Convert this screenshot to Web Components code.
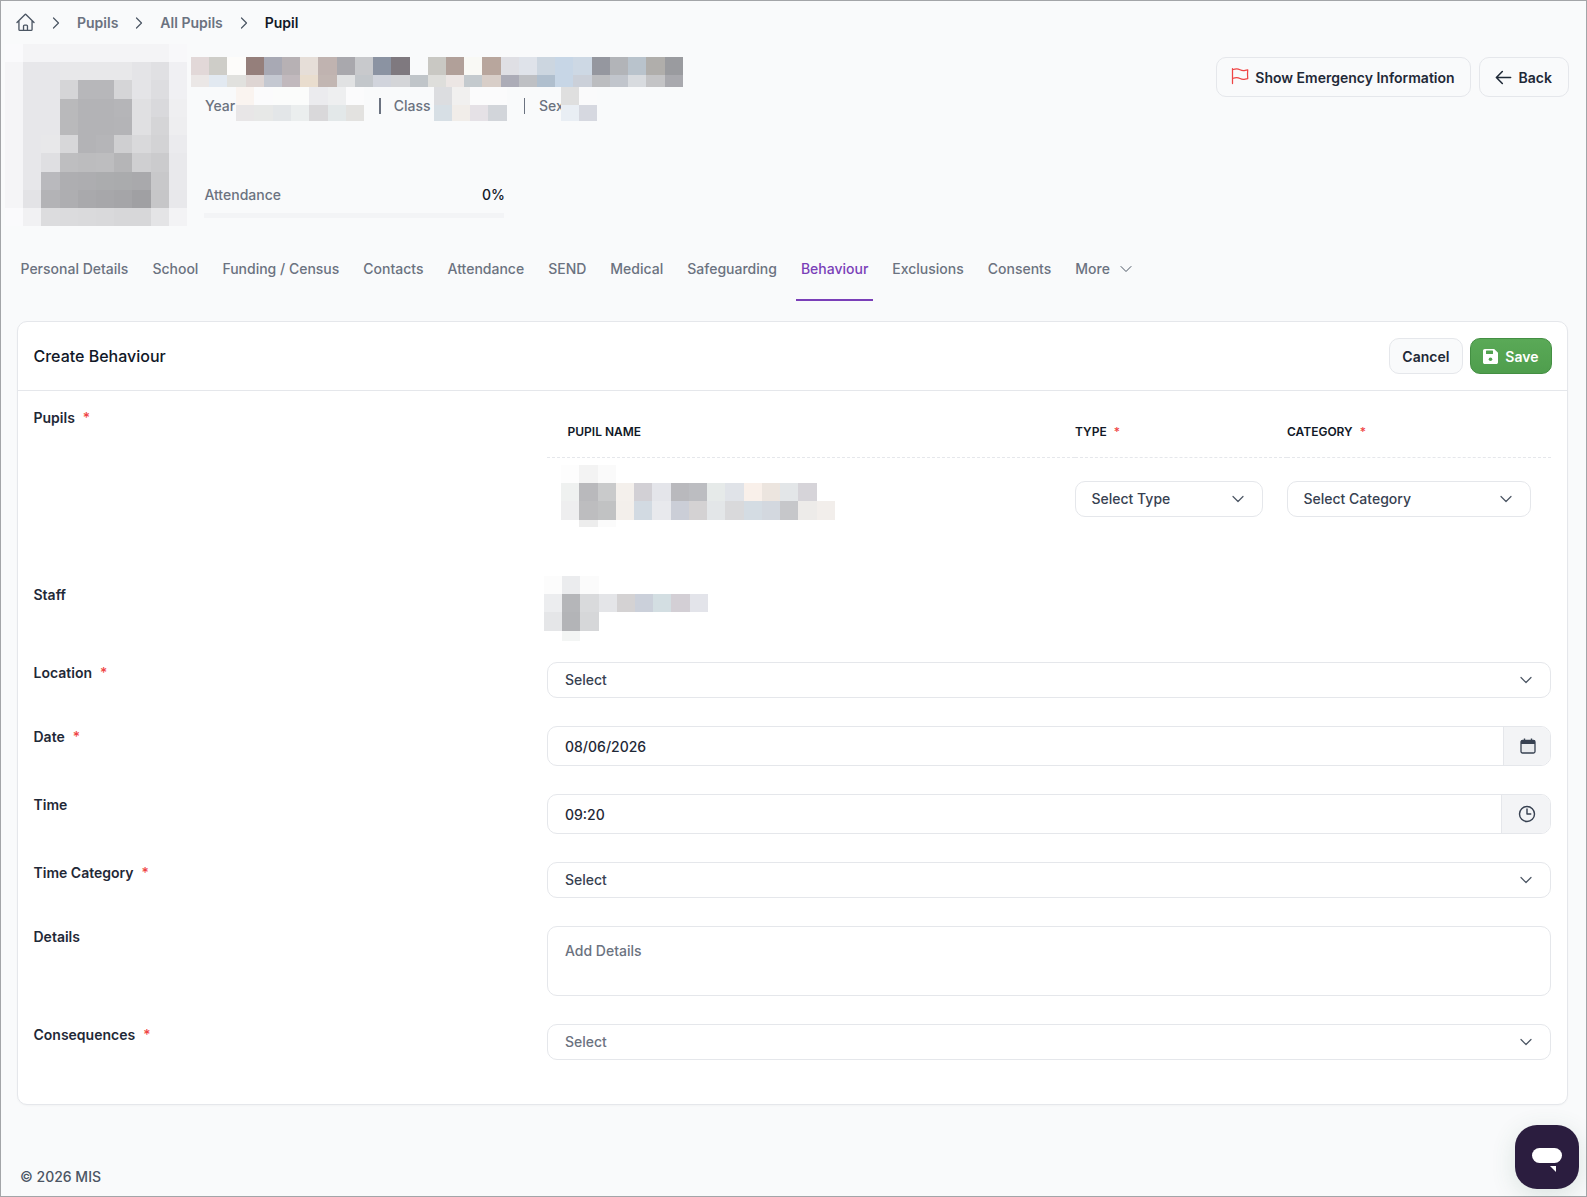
<!DOCTYPE html>
<html lang="en">
<head>
<meta charset="utf-8">
<title>Create Behaviour</title>
<style>
  html, body { margin: 0; padding: 0; background: #f9fafb; }
  body { font: 500 14px/20px Inter, "Liberation Sans", sans-serif; color: #1f2937; }
</style>
</head>
<body>

<mis-frame>
  <mis-breadcrumb></mis-breadcrumb>
  <pupil-header></pupil-header>
  <tab-bar></tab-bar>

  <form-card heading="Create Behaviour">
    <form-row label="Pupils" required><pupil-table></pupil-table></form-row>
    <form-row label="Staff">
      <pixel-mosaic style="margin: -9px 0 -7px -3px" w="18.2" heights="18 18 19 10" rows="fcfcfc ebecee fbfbfb|ecedef b5b6b9 d9dadc e4e5e8 d4d2d3 cbd0da d3dee2 d3cfd5 e3e4ea|e5e6e8 b3b4b7 d6d7d9|x f3f5f4"></pixel-mosaic>
    </form-row>
    <form-row low label="Location" required><select-box>Select</select-box></form-row>
    <form-row low label="Date" required><addon-input value="08/06/2026" icon="calendar" addon="47"></addon-input></form-row>
    <form-row low label="Time"><addon-input value="09:20" icon="clock" addon="49"></addon-input></form-row>
    <form-row low label="Time Category" required><select-box>Select</select-box></form-row>
    <form-row low label="Details"><details-area>Add Details</details-area></form-row>
    <form-row low label="Consequences" required><select-box muted>Select</select-box></form-row>
  </form-card>

  <mis-footer></mis-footer>
</mis-frame>
<chat-launcher></chat-launcher>

<script>
(function() {

  const icons = {
    chevronDown: '<path d="M19.5 8.25l-7.5 7.5-7.5-7.5"/>',
    chevronRight: '<path d="M8.25 4.5l7.5 7.5-7.5 7.5"/>',
    home: '<path d="M2.25 12l8.954-8.955c.44-.439 1.152-.439 1.591 0L21.75 12M4.5 9.75v10.125c0 .621.504 1.125 1.125 1.125H9.75v-4.875c0-.621.504-1.125 1.125-1.125h2.25c.621 0 1.125.504 1.125 1.125V21h4.125c.621 0 1.125-.504 1.125-1.125V9.75M8.25 21h8.25"/>',
    flag: '<path d="M3 3v1.5M3 21v-6m0 0l2.77-.693a9 9 0 016.208.682l.108.054a9 9 0 006.086.71l3.114-.732a48.524 48.524 0 01-.005-10.499l-3.11.732a9 9 0 01-6.085-.711l-.108-.054a9 9 0 00-6.208-.682L3 4.5M3 15V4.5"/>',
    back: '<path d="M10.5 19.5L3 12m0 0l7.5-7.5M3 12h18"/>',
    clock: '<path d="M12 6v6h4.5m4.5 0a9 9 0 11-18 0 9 9 0 0118 0z"/>'
  };

  const svg = (name, size, stroke, width) =>
    `<svg width="${size}" height="${size}" viewBox="0 0 24 24" fill="none" stroke="${stroke}" stroke-width="${width}" stroke-linecap="round" stroke-linejoin="round">${icons[name]}</svg>`;

  /**
   * Base class, sets up the open shadow root with the element's html
   */
  class ShadowBase extends HTMLElement {
    connectedCallback() {
      if (this.shadowRoot) return;
      this.$root = this.attachShadow({ mode: 'open' });
      this.$root.innerHTML = this.template();
    }
  }

  class MisFrame extends ShadowBase {
    template() {
      return `
        <style>
          :host { display: flex; flex-direction: column; box-sizing: border-box; height: 1197px; border: 1px solid #a3a5a8; background: #f9fafb; overflow: hidden; }
        </style>
        <slot></slot>`;
    }
  }

  class MisBreadcrumb extends ShadowBase {
    template() {
      const chev = svg('chevronRight', 16, '#4b5563', 1.8);
      return `
        <style>
          :host { display: flex; align-items: center; box-sizing: border-box; height: 43px; padding: 0 0 0 14px; gap: 13px; color: #6b7280; font-weight: 600; }
          svg { display: block; flex: none; }
          b { font-weight: 600; color: #111827; }
          span { margin-top: 1px; }
          .home { margin-right: -1px; margin-top: -1px; }
        </style>
        <div class="home">${svg('home', 21, '#4b5563', 1.5)}</div>
        ${chev}<span>Pupils</span>${chev}<span>All Pupils</span>${chev}<span><b>Pupil</b></span>`;
    }
  }

  /**
   * Blurred out picture or name, a grid of coloured cells
   * @attr rows colours, cells split by space and rows by |, x is see-through
   */
  class PixelMosaic extends ShadowBase {
    template() {
      const w = parseFloat(this.getAttribute('w'));
      const heights = this.getAttribute('heights').split(' ');
      const rows = this.getAttribute('rows').split('|').map(r => r.split(' '));
      const cols = Math.max(...rows.map(r => r.length));
      let cells = '';
      rows.forEach(r => {
        for (let i = 0; i < cols; i++) {
          const c = r[i];
          cells += `<i style="background:${c && c !== 'x' ? '#' + c : 'transparent'}"></i>`;
        }
      });
      return `
        <style>
          :host { display: grid; flex: none; width: max-content; grid-template-columns: repeat(${cols}, ${w}px); grid-template-rows: ${heights.map(h => h + 'px').join(' ')}; }
          i { display: block; }
        </style>
        ${cells}`;
    }
  }

  class UiButton extends ShadowBase {
    template() {
      return `
        <style>
          :host { display: inline-flex; align-items: center; box-sizing: border-box; height: var(--btn-h, 40px); border: 1px solid #e5e7eb; border-radius: 10px; background: #f9fafb; color: #1f2937; font-weight: 600; white-space: nowrap; }
          :host([primary]) { background: linear-gradient(#5aa957, #4f9e4d); border-color: #448f43; color: #fff; }
        </style>
        <slot></slot>`;
    }
  }

  class PupilHeader extends ShadowBase {
    connectedCallback() {
      if (this.shadowRoot) return;
      this.$root = this.attachShadow({ mode: 'open' });
      this.$root.innerHTML = `
        <style>
          :host { display: flex; align-items: flex-start; height: 182px; padding: 0 17px 0 4px; }
          .mid { margin-left: 4px; padding-top: 13px; color: #6b7280; }
          .meta { display: flex; align-items: flex-start; height: 34px; padding-left: 14px; }
          .meta span { margin-top: 9px; white-space: nowrap; }
          .meta u { display: block; width: 1.5px; height: 16px; margin-top: 11px; background: #6b7280; }
          .att { display: flex; justify-content: space-between; width: 300.5px; margin: 64px 0 0 13.5px; }
          .att b { font-weight: 500; color: #111827; }
          .bar { width: 300px; height: 5px; margin: 8px 0 0 13.5px; background: #f3f4f6; }
          .actions { display: flex; gap: 8px; margin-left: auto; padding-top: 13px; }
          ui-button svg { display: block; flex: none; margin-top: -2px; }
          .flag { padding: 2px 15px 0 13px; }
          .flag svg { margin-right: 5px; margin-top: -4px; }
          .back { padding: 2px 16px 0 14px; }
          .back svg { margin-right: 6px; }
        </style>
        <pixel-mosaic w="18.2" heights="18 18 19 18 18 18 19 18 18 18" rows="fafafc f4f4f6 f4f4f6 f4f4f6 f4f4f6 f4f4f6 f4f4f6 f4f4f6 f4f4f6 f8f8fa|f5f5f7 e7e7ea e7e7ea e8e8ea e8e8ea e8e8ea e8e8ea e4e4e7 e0e0e3 f0f0f3|f5f5f7 e7e7ea e7e7ea d5d5d7 b7b7ba b7b7ba d5d5d7 e4e4e7 dddde0 f0f0f3|f5f5f7 e7e7ea e7e7ea b9b9bb b3b3b6 b3b3b6 b5b5b8 e0e0e2 d9d9dc efeff1|f5f5f7 e7e7ea e7e7ea b9b9bb b3b3b6 b3b3b6 b4b4b7 e0e0e2 d5d5d7 eeeef0|f5f5f7 e7e7ea e8e8ea d7d7d9 b3b3b6 b5b5b8 cfcfd1 d9d9db d3d3d5 ebebee|f5f5f7 e7e7ea dfdfe2 bebec0 bcbcbe bdbdbf b5b5b7 cfcfd1 cbcbcd e9e9ec|f5f5f7 e7e7ea b9b9bd aeaeb1 adadb0 abacae aaabad a9a9ac c8c8ca e9e9ec|f5f5f7 e3e3e6 b3b3b6 aeaeb1 a9a9ac a7a7aa a5a5a8 a0a0a3 c6c6c8 e8e8eb|fafafc f1f1f3 dcdcde dbdbdd dadadc d9d9db d7d7d9 d7d7d9 e4e4e6 f3f3f5"></pixel-mosaic>
        <div class="mid">
          <pixel-mosaic w="18.22" heights="18 12" rows="e2d8d8 cecdc8 fdfcfa 957f7b a8a9b4 b7b1b4 e6ded8 c0b3b0 a9a8ad c8c9cc 8b93a2 7f797f x c9c8c3 b1a099 f9f9f5 b8a69d dfdfe4 dfe3ea ccd6e0 c7d6e6 cdd8e4 95979f b2b4b8 b9c3cc b0aeab 9a9b9f|ebe7e6 e2e9f1 e1e1de ded5d3 c4c8d1 c1b9bd e9ddce c2b6b2 e1e2e3 c3c7cb d1d4dc d4d5d8 c0c5c9 dededb ece6e4 c4cace d8cec8 acacb7 bec0c4 b0bfce c7d6e6 cbd0d9 bcbdc0 c1c5cc d8dbdf c4c4c6 a9a9ae"></pixel-mosaic>
          <div class="meta">
            <span>Year</span>
            <pixel-mosaic style="margin-left:1px" w="18.3" heights="18 16" rows="faf4f0 fbfbfc fbfcfb fbfcfb ebebee eeeff0 fbfbfc|e8e6e7 e7e8e7 e3e6e8 ebeeee d9d8da e3e8e9 e3e2e0"></pixel-mosaic>
            <u style="margin-left:15px"></u>
            <span style="margin-left:13px">Class</span>
            <pixel-mosaic style="margin-left:3px" w="18.25" heights="18 16" rows="dcdde0 f1f0ef fbfbfc fbfbfc|d7dfe5 f1ede9 e5e1e6 d2d5da"></pixel-mosaic>
            <u style="margin-left:17px"></u>
            <span style="margin-left:14px">Sex</span>
            <pixel-mosaic style="margin-left:-3px" w="18" heights="18 16" rows="dfdfdf fafafb|e9eef4 d6d8e0"></pixel-mosaic>
          </div>
          <div class="att"><span>Attendance</span><b>0%</b></div>
          <div class="bar"></div>
        </div>
        <div class="actions">
          <ui-button class="flag">${svg('flag', 20, '#ef4444', 1.5)}Show Emergency Information</ui-button>
          <ui-button class="back">${svg('back', 19, '#1f2937', 2)}Back</ui-button>
        </div>`;
    }
  }

  class TabBar extends ShadowBase {
    template() {
      const tabs = ['Personal Details', 'School', 'Funding / Census', 'Contacts', 'Attendance', 'SEND', 'Medical', 'Safeguarding', 'Behaviour', 'Exclusions', 'Consents'];
      return `
        <style>
          :host { display: flex; gap: 15px; padding: 26px 0 20px 15px; color: #6b7280; font-weight: 500; }
          a { display: flex; align-items: center; padding: 7px 4.5px 20px; border-bottom: 2px solid transparent; white-space: nowrap; }
          a.on { color: #7a3fb8; border-bottom-color: #7a3fb8; }
          svg { display: block; margin-left: 8px; }
        </style>
        ${tabs.map(t => `<a class="${t === 'Behaviour' ? 'on' : ''}">${t}</a>`).join('')}
        <a>More${svg('chevronDown', 16, '#4b5563', 1.5)}</a>`;
    }
  }

  class FormCard extends ShadowBase {
    template() {
      return `
        <style>
          :host { display: block; margin: 0 18px 0 16px; border: 1px solid #e5e7eb; border-radius: 10px; background: #fff; box-shadow: 0 1px 2px rgba(0,0,0,.03); }
          header { display: flex; align-items: center; justify-content: space-between; box-sizing: border-box; height: 69px; padding: 0 15px 0 15.5px; border-bottom: 1px solid #e5e7eb; }
          h2 { margin: 0; font-size: 16px; font-weight: 500; line-height: 24px; color: #111827; }
          .actions { display: flex; gap: 7px; --btn-h: 36px; }
          ui-button { padding: 2px 12.5px 0; }
          .save svg { display: block; margin: -2px 7px 0 0; }
          .body { display: flex; flex-direction: column; gap: 28px; padding: 17px 16px 44px 15.5px; }
        </style>
        <header>
          <h2>${this.getAttribute('heading')}</h2>
          <div class="actions">
            <ui-button class="cancel">Cancel</ui-button>
            <ui-button class="save" primary>
              <svg width="15" height="15" viewBox="0 0 15 15"><path fill="#fff" d="M1.8 0h9.4L15 3.8v9.4c0 1-.8 1.8-1.8 1.8H1.8C.8 15 0 14.2 0 13.2V1.8C0 .8.800 0 1.800 0z"/><rect x="3" y="1.500" width="7" height="3.500" rx=".6" fill="#52a250"/><circle cx="7.500" cy="10.300" r="1.800" fill="#52a250"/></svg>
              Save
            </ui-button>
          </div>
        </header>
        <div class="body"><slot></slot></div>`;
    }
  }

  class FormRow extends ShadowBase {
    template() {
      const star = this.hasAttribute('required') ? '<em>*</em>' : '';
      return `
        <style>
          :host { display: grid; grid-template-columns: 513.5px 1fr; --sb-pad: 17px; }
          :host([low]) label { margin-top: 1px; }
          label { font-weight: 600; color: #1f2937; }
          em { margin-left: 8px; font-style: normal; font-weight: 500; color: #ef4444; }
        </style>
        <label>${this.getAttribute('label')}${star}</label>
        <div><slot></slot></div>`;
    }
  }

  class SelectBox extends ShadowBase {
    template() {
      return `
        <style>
          :host { display: flex; align-items: center; justify-content: space-between; box-sizing: border-box; height: 36px; padding: 0 16px 0 var(--sb-pad, 16px); border: 1px solid #e5e7eb; border-radius: 10px; background: #fff; color: #374151; }
          :host([muted]) { color: #6b7280; }
          svg { display: block; flex: none; }
        </style>
        <span><slot></slot></span>${svg('chevronDown', 16, '#4b5563', 1.8)}`;
    }
  }

  class AddonInput extends ShadowBase {
    template() {
      const calendar = `<svg width="16" height="16" viewBox="0 0 16 16" fill="none"><rect x="1" y="2.500" width="14" height="12.500" rx="1.500" fill="#e9ebee" stroke="#374151" stroke-width="1.300"/><path fill="#374151" d="M1 3.500c0-.8.700-1.500 1.500-1.500h11c.8 0 1.500.700 1.500 1.500V6H1z"/><path stroke="#374151" stroke-width="1.400" d="M4.500 .5v3M11.500 .5v3"/></svg>`;
      const icon = this.getAttribute('icon') === 'calendar' ? calendar : svg('clock', 20, '#374151', 1.7);
      return `
        <style>
          :host { display: flex; box-sizing: border-box; height: 40px; border: 1px solid #e5e7eb; border-radius: 10px; background: #fff; overflow: hidden; color: #1f2937; }
          .val { flex: 1; padding: 1px 17px 0; line-height: 38px; }
          .add { display: flex; align-items: center; justify-content: center; width: ${this.getAttribute('addon')}px; margin: -1px -1px -1px 0; border-left: 1px solid #e5e7eb; background: #f3f4f6; }
          svg { display: block; }
        </style>
        <div class="val">${this.getAttribute('value')}</div>
        <div class="add">${icon}</div>`;
    }
  }

  class DetailsArea extends ShadowBase {
    template() {
      return `
        <style>
          :host { display: block; box-sizing: border-box; height: 70px; padding: 14px 17px; border: 1px solid #e5e7eb; border-radius: 10px; color: #6b7280; }
        </style>
        <slot></slot>`;
    }
  }

  class PupilTable extends ShadowBase {
    template() {
      return `
        <style>
          :host { display: grid; grid-template-columns: 528px 212px 1fr; grid-template-rows: 50px 99px; height: 149px; --sb-pad: 15.5px; }
          .th { box-sizing: border-box; padding-top: 14px; border-bottom: 1px dashed #e5e7eb; font-size: 12px; font-weight: 600; color: #111827; white-space: nowrap; }
          .th em { margin-left: 7px; font-style: normal; font-weight: 500; color: #ef4444; }
          .first { padding-left: 20.5px; }
          .cell { padding-top: 23px; }
          .mos { padding: 7px 0 0 14px; }
        </style>
        <div class="th first">PUPIL NAME</div>
        <div class="th">TYPE<em>*</em></div>
        <div class="th">CATEGORY<em>*</em></div>
        <div class="mos">
          <pixel-mosaic w="18.27" heights="18 18 19 7" rows="fdfdfd f3f3f3 fafafa|eff1f0 b9b9bc c9cacb f4f0ec d2d0d5 e4e5ea b9b9bd bcbdc1 e6eae9 e0e3e8 f9f0ea ece5df e3e6e8 d6d4d9|eeeeef bdbdbf c1c2c3 f3efeb d2dae2 e8e9ed cbced7 d4d2d3 e3e6e8 d9d9db d4dce3 d3d8df c6c7ca edebe9 f2eeeb|x ededed fbfbfb"></pixel-mosaic>
        </div>
        <div class="cell" style="padding-right:24px"><select-box>Select Type</select-box></div>
        <div class="cell" style="padding-right:20px"><select-box>Select Category</select-box></div>`;
    }
  }

  class MisFooter extends ShadowBase {
    template() {
      return `
        <style>
          :host { display: block; margin-top: auto; padding: 0 0 9px 19px; color: #4b5563; }
        </style>
        &copy; 2026 MIS`;
    }
  }

  class ChatLauncher extends ShadowBase {
    template() {
      return `
        <style>
          :host { display: block; position: fixed; right: 8px; bottom: 8px; width: 64px; height: 64px; border-radius: 22px; background: #2b1d3f; box-shadow: 0 6px 24px rgba(60, 110, 90, .16); }
          svg { display: block; }
        </style>
        <svg width="64" height="64" viewBox="0 0 64 64"><rect x="17" y="23" width="30" height="15" rx="7.500" fill="#fff"/><path fill="#fff" d="M35 41h6v6z"/></svg>`;
    }
  }

  customElements.define('pixel-mosaic', PixelMosaic);
  customElements.define('ui-button', UiButton);
  customElements.define('select-box', SelectBox);
  customElements.define('addon-input', AddonInput);
  customElements.define('details-area', DetailsArea);
  customElements.define('pupil-table', PupilTable);
  customElements.define('form-row', FormRow);
  customElements.define('form-card', FormCard);
  customElements.define('tab-bar', TabBar);
  customElements.define('pupil-header', PupilHeader);
  customElements.define('mis-breadcrumb', MisBreadcrumb);
  customElements.define('mis-footer', MisFooter);
  customElements.define('mis-frame', MisFrame);
  customElements.define('chat-launcher', ChatLauncher);
})();
</script>
</body>
</html>
